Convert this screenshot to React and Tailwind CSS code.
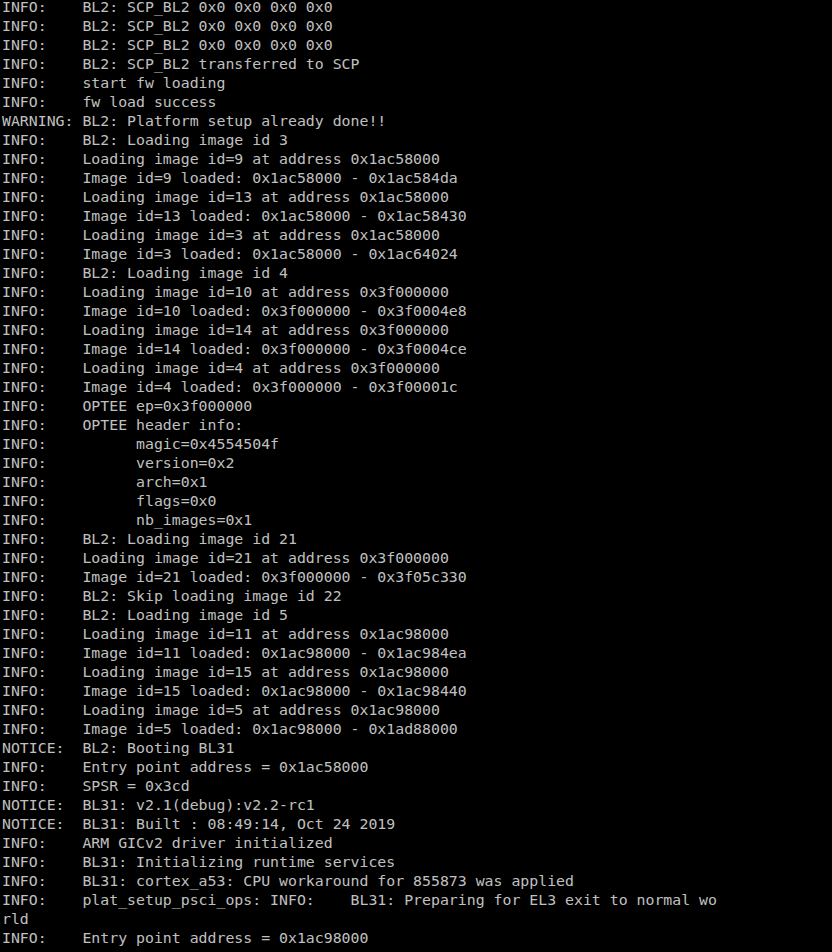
const lines = [
  'INFO:    BL2: SCP_BL2 0x0 0x0 0x0 0x0',
  'INFO:    BL2: SCP_BL2 0x0 0x0 0x0 0x0',
  'INFO:    BL2: SCP_BL2 0x0 0x0 0x0 0x0',
  'INFO:    BL2: SCP_BL2 transferred to SCP',
  'INFO:    start fw loading',
  'INFO:    fw load success',
  'WARNING: BL2: Platform setup already done!!',
  'INFO:    BL2: Loading image id 3',
  'INFO:    Loading image id=9 at address 0x1ac58000',
  'INFO:    Image id=9 loaded: 0x1ac58000 - 0x1ac584da',
  'INFO:    Loading image id=13 at address 0x1ac58000',
  'INFO:    Image id=13 loaded: 0x1ac58000 - 0x1ac58430',
  'INFO:    Loading image id=3 at address 0x1ac58000',
  'INFO:    Image id=3 loaded: 0x1ac58000 - 0x1ac64024',
  'INFO:    BL2: Loading image id 4',
  'INFO:    Loading image id=10 at address 0x3f000000',
  'INFO:    Image id=10 loaded: 0x3f000000 - 0x3f0004e8',
  'INFO:    Loading image id=14 at address 0x3f000000',
  'INFO:    Image id=14 loaded: 0x3f000000 - 0x3f0004ce',
  'INFO:    Loading image id=4 at address 0x3f000000',
  'INFO:    Image id=4 loaded: 0x3f000000 - 0x3f00001c',
  'INFO:    OPTEE ep=0x3f000000',
  'INFO:    OPTEE header info:',
  'INFO:          magic=0x4554504f',
  'INFO:          version=0x2',
  'INFO:          arch=0x1',
  'INFO:          flags=0x0',
  'INFO:          nb_images=0x1',
  'INFO:    BL2: Loading image id 21',
  'INFO:    Loading image id=21 at address 0x3f000000',
  'INFO:    Image id=21 loaded: 0x3f000000 - 0x3f05c330',
  'INFO:    BL2: Skip loading image id 22',
  'INFO:    BL2: Loading image id 5',
  'INFO:    Loading image id=11 at address 0x1ac98000',
  'INFO:    Image id=11 loaded: 0x1ac98000 - 0x1ac984ea',
  'INFO:    Loading image id=15 at address 0x1ac98000',
  'INFO:    Image id=15 loaded: 0x1ac98000 - 0x1ac98440',
  'INFO:    Loading image id=5 at address 0x1ac98000',
  'INFO:    Image id=5 loaded: 0x1ac98000 - 0x1ad88000',
  'NOTICE:  BL2: Booting BL31',
  'INFO:    Entry point address = 0x1ac58000',
  'INFO:    SPSR = 0x3cd',
  'NOTICE:  BL31: v2.1(debug):v2.2-rc1',
  'NOTICE:  BL31: Built : 08:49:14, Oct 24 2019',
  'INFO:    ARM GICv2 driver initialized',
  'INFO:    BL31: Initializing runtime services',
  'INFO:    BL31: cortex_a53: CPU workaround for 855873 was applied',
  'INFO:    plat_setup_psci_ops: INFO:    BL31: Preparing for EL3 exit to normal wo',
  'rld',
  'INFO:    Entry point address = 0x1ac98000',
];

export default function App() {
  return (
    <div className="w-[832px] h-[952px] overflow-hidden bg-black pl-[2px]">
      <div className="font-['DejaVu_Sans_Mono',monospace] text-[14.85px] leading-[15px] text-[#c0c0c0]">
        {lines.map((line, i) => (
          <div key={i} className="whitespace-pre h-[19px]">
            {line}
          </div>
        ))}
      </div>
    </div>
  );
}
